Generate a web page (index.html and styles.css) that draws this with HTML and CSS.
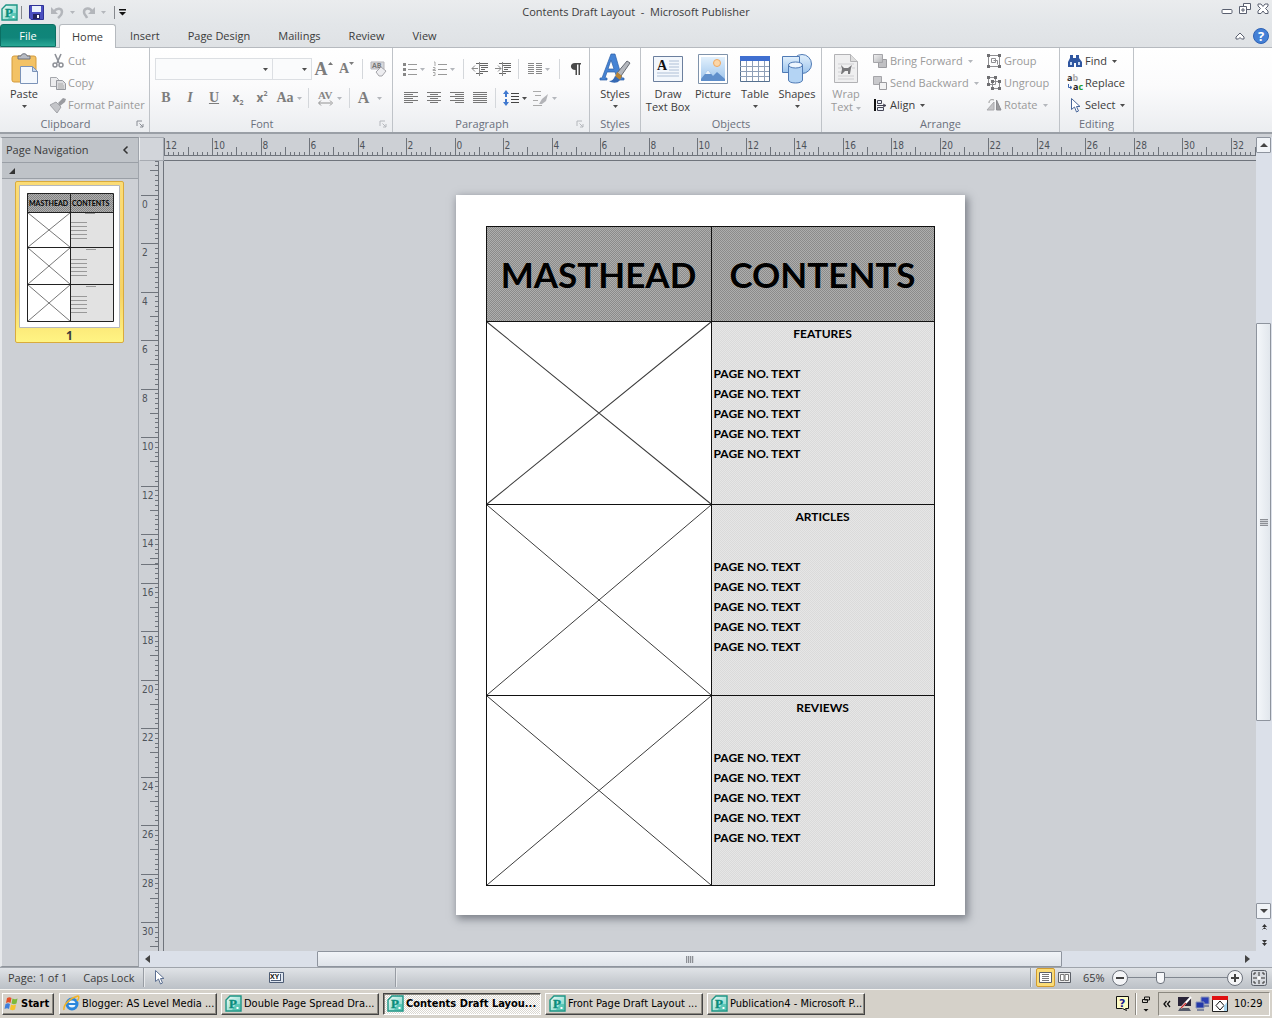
FILE: index.html
```html
<!DOCTYPE html>
<html lang="en">
<head>
<meta charset="utf-8">
<title>Contents Draft Layout - Microsoft Publisher</title>
<link rel="stylesheet" href="styles.css">
</head>
<body>
<svg class="defs" aria-hidden="true">
  <defs>
    <linearGradient id="teal" x1="0" y1="0" x2="1" y2="1"><stop offset="0" stop-color="#f2fdfa"/><stop offset="1" stop-color="#6fd0c0"/></linearGradient>
    <linearGradient id="blue" x1="0" y1="0" x2="0" y2="1"><stop offset="0" stop-color="#e2f0fc"/><stop offset="1" stop-color="#9cc4ec"/></linearGradient>
    <linearGradient id="grey" x1="0" y1="0" x2="1" y2="1"><stop offset="0" stop-color="#f2f2f3"/><stop offset="1" stop-color="#b4b5b8"/></linearGradient>
  </defs>
  <symbol id="pub" viewBox="0 0 17 17">
    <path d="M5 1h11v15H1V5z" fill="url(#teal)" stroke="#1c9585" stroke-width="1.4"/>
    <path d="M11 9h4v6H7z" fill="#35b8a4" opacity=".6"/>
    <text x="4" y="13" font-family="Liberation Serif, serif" font-weight="700" font-size="13" fill="#0b8d7d" stroke="#0b8d7d" stroke-width=".4">P</text>
    <path d="M11.500 12h2v2h-2z" fill="#fff"/>
  </symbol>
  <symbol id="down" viewBox="0 0 5 3"><path d="M0 0h5L2.500 3z" fill="currentColor"/></symbol>
  <symbol id="launch" viewBox="0 0 8 8"><path d="M1 6V1h5M3.500 3.500L7 7M7 4v3H4" fill="none" stroke="currentColor"/></symbol>
</svg>

<header class="titlebar">
  <div class="quick">
    <svg width="17" height="17"><use href="#pub"/></svg>
    <i class="bar"></i>
    <button class="flat" aria-label="Save"><svg width="15" height="15" viewBox="0 0 15 15"><path d="M.5.500h14v14H2l-1.500-1.500z" fill="#4a4fc0" stroke="#2e3296"/><path d="M3 1h9v6H3z" fill="#eaf2fb"/><path d="M4 9h7v5H4z" fill="#23245f"/><path d="M8 10h2v3H8z" fill="#fff"/></svg></button>
    <button class="flat undo" aria-label="Undo"><svg width="14" height="13" viewBox="0 0 14 13"><path d="M3 5.500C6 1.500 11 2 11 6c0 3-2 4-4 6" fill="none" stroke="#b3b6bb" stroke-width="2.500"/><path d="M0 1v7h7z" fill="#b3b6bb"/></svg></button>
    <svg class="dd pale" width="5" height="3"><use href="#down"/></svg>
    <button class="flat redo" aria-label="Redo"><svg width="14" height="13" viewBox="0 0 14 13"><path d="M10 5.500C8 1 2 2 2 6c0 3 2 3 3 6" fill="none" stroke="#b3b6bb" stroke-width="2.500"/><path d="M13 1v7H6z" fill="#b3b6bb"/></svg></button>
    <svg class="dd pale" width="5" height="3"><use href="#down"/></svg>
    <i class="bar"></i>
    <button class="flat" aria-label="Customize toolbar"><svg width="7" height="7" viewBox="0 0 7 7"><path d="M0 0h7v1.500H0zM0 3h7L3.500 6.500z" fill="#111"/></svg></button>
  </div>
  <h1>Contents Draft Layout &nbsp;-&nbsp; Microsoft Publisher</h1>
  <div class="winbtns">
    <button class="flat" aria-label="Minimize"><svg width="12" height="12" viewBox="0 0 12 12"><rect x="1" y="6.500" width="10" height="4" rx="1" fill="#fff" stroke="#5a6070"/></svg></button>
    <button class="flat" aria-label="Restore"><svg width="12" height="12" viewBox="0 0 12 12"><path d="M4.500.500h7v6h-7z" fill="#fff" stroke="#5a6070"/><path d="M.5 3.500h7v7h-7z" fill="#fff" stroke="#5a6070"/><path d="M3 6h2v2H3z" fill="#fff" stroke="#5a6070"/></svg></button>
    <button class="flat" aria-label="Close"><svg width="12" height="12" viewBox="0 0 12 12"><path d="M1 1h3l2 2.500L8 1h3v2L8.500 5.500 11 8v2.500H8L6 8l-2 2.500H1V8l2.500-2.500L1 3z" fill="#fff" stroke="#5a6070"/></svg></button>
  </div>
</header>

<nav class="tabs">
  <button class="tab file">File</button>
  <button class="tab home">Home</button>
  <button class="tab">Insert</button>
  <button class="tab">Page Design</button>
  <button class="tab">Mailings</button>
  <button class="tab">Review</button>
  <button class="tab">View</button>
  <div class="tabend">
    <button class="flat" aria-label="Minimize the ribbon"><svg width="10" height="8" viewBox="0 0 10 8"><path d="M1 5l4-4 4 4v2H6.500L5 5.500 3.500 7H1z" fill="#fff" stroke="#5a6070"/></svg></button>
    <button class="flat" aria-label="Help"><svg width="16" height="16" viewBox="0 0 16 16"><circle cx="8" cy="8" r="7.500" fill="#4480d6" stroke="#2f62b4"/><text x="8" y="12.500" text-anchor="middle" font-family="Open Sans, sans-serif" font-weight="700" font-size="13" fill="#fff">?</text></svg></button>
  </div>
</nav>

<section class="ribbon">
  <div class="group clip">
    <div class="gbody">
      <button class="big"><svg width="32" height="32" viewBox="0 0 32 32"><rect x="4" y="3" width="24" height="26" rx="2" fill="#f3c265" stroke="#d49b3c"/><path d="M10 6V3h3c0-3 6-3 6 0h3v3z" fill="#b8bcc4" stroke="#6c717c"/><path d="M12.500 13.500h12l5 5v12h-17z" fill="#f4f8fd" stroke="#7b93b8"/><path d="M24.500 13.500v5h5z" fill="#c5d6ec" stroke="#7b93b8"/></svg><span>Paste</span><svg class="dd" width="5" height="3"><use href="#down"/></svg></button>
      <div class="smalls">
        <button class="sm off"><svg width="16" height="16" viewBox="0 0 16 16"><path d="M5 1l4 9M11 1l-4 9" stroke="#8d9097" stroke-width="1.600"/><circle cx="5" cy="12" r="2" fill="none" stroke="#8d9097" stroke-width="1.500"/><circle cx="11" cy="12" r="2" fill="none" stroke="#8d9097" stroke-width="1.500"/></svg>Cut</button>
        <button class="sm off"><svg width="16" height="16" viewBox="0 0 16 16"><path d="M.5 2.500h6l2 2v7h-8z" fill="#ececee" stroke="#a5a7ac"/><path d="M6.500 5.500h6l3 3v6h-9z" fill="#dcdcdf" stroke="#97999f"/><path d="M8 9h5M8 11h6M8 13h6" stroke="#aaa"/></svg>Copy</button>
        <button class="sm off"><svg width="16" height="16" viewBox="0 0 16 16"><path d="M0 8l6-3 5 5-4 6z" fill="#c4c5c9" stroke="#a2a3a8"/><path d="M8 6l5-5 3 1-1 3-5 4z" fill="#9a9ba0"/></svg>Format Painter</button>
      </div>
    </div>
    <div class="glabel"><span>Clipboard</span><button class="launch" aria-label="Clipboard options"><svg width="8" height="8"><use href="#launch"/></svg></button></div>
  </div>

  <div class="group font">
    <div class="gbody rows">
      <div class="row">
        <button class="combo wide" aria-label="Font"><svg class="dd" width="5" height="3"><use href="#down"/></svg></button>
        <button class="combo" aria-label="Font size"><svg class="dd" width="5" height="3"><use href="#down"/></svg></button>
        <button class="t serif fs18" aria-label="Grow font">A<svg class="sup" width="5" height="3" viewBox="0 0 5 3"><path d="M0 3h5L2.500 0z" fill="#777"/></svg></button>
        <button class="t serif fs14" aria-label="Shrink font">A<svg class="sup" width="5" height="3"><use href="#down"/></svg></button>
        <i class="sep"></i>
        <button class="t" aria-label="Clear formatting"><svg width="17" height="16" viewBox="0 0 17 16"><path d="M1 1h13v7H1z" fill="#d8d8db" stroke="#b5b5ba"/><text x="2" y="7" font-family="Open Sans, sans-serif" font-weight="700" font-size="7" fill="#777">AB</text><path d="M6 11l5-5 5 4-4 5H9z" fill="#ededf0" stroke="#a5a5aa"/></svg></button>
      </div>
      <div class="row r2">
        <button class="t m serif fs14">B</button>
        <button class="t m serif fs14 it">I</button>
        <button class="t m serif fs14 un">U</button>
        <button class="t m fs12 bold">x<sub>2</sub></button>
        <button class="t m fs12 bold">x<sup>2</sup></button>
        <button class="t l serif fs14">Aa<svg class="dd pale" width="5" height="3"><use href="#down"/></svg></button>
        <i class="sep"></i>
        <button class="t xl" aria-label="Character spacing"><svg width="17" height="16" viewBox="0 0 17 16"><text x="1" y="9" font-family="Liberation Serif, serif" font-weight="700" font-size="11" fill="#858585">AV</text><path d="M2 13h12M4 10.500L1.500 13 4 15.500M13 10.500l2.500 2.500-2.500 2.500" fill="none" stroke="#929292"/></svg><svg class="dd pale" width="5" height="3"><use href="#down"/></svg></button>
        <i class="sep"></i>
        <button class="t xl serif fs16 wideg">A<svg class="dd pale" width="5" height="3"><use href="#down"/></svg></button>
      </div>
    </div>
    <div class="glabel"><span>Font</span><button class="launch off" aria-label="Font options"><svg width="8" height="8"><use href="#launch"/></svg></button></div>
  </div>

  <div class="group para">
    <div class="gbody rows">
      <div class="row">
        <button class="t l" aria-label="Bullets"><svg width="14" height="14" viewBox="0 0 14 14"><path d="M5 2.500h9M5 7.500h9M5 12.500h9" stroke="#999"/><path d="M0 1h3v3H0zM0 6h3v3H0zM0 11h3v3H0z" fill="#888"/></svg><svg class="dd pale" width="5" height="3"><use href="#down"/></svg></button>
        <button class="t l" aria-label="Numbering"><svg width="14" height="14" viewBox="0 0 14 14"><path d="M5 2.500h9M5 7.500h9M5 12.500h9" stroke="#999"/><path d="M1 0h1v4M0 5.500h2v2H0v1h3M0 10.500h2v3H0" fill="none" stroke="#aaa"/></svg><svg class="dd pale" width="5" height="3"><use href="#down"/></svg></button>
        <i class="sep"></i>
        <button class="t" aria-label="Decrease indent"><svg width="16" height="14" viewBox="0 0 16 14"><path d="M4 1.500h12M7 3.500h9M9 5.500h7M9 7.500h4M7 9.500h9M4 11.500h7" stroke="#666"/><path d="M0 6.500h6M3 3.500l-3 3 3 3M7.500 0v14" fill="none" stroke="#8a8a8a"/></svg></button>
        <button class="t" aria-label="Increase indent"><svg width="16" height="14" viewBox="0 0 16 14"><path d="M4 1.500h12M7 3.500h9M9 5.500h7M9 7.500h4M7 9.500h9M4 11.500h7" stroke="#666"/><path d="M0 6.500h6M3 3.500l3 3-3 3M7.500 0v14" fill="none" stroke="#8a8a8a"/></svg></button>
        <i class="sep"></i>
        <button class="t xl" aria-label="Columns"><svg width="14" height="12" viewBox="0 0 14 12"><path d="M0 .5h6M0 2.500h6M0 4.500h6M0 6.500h6M0 8.500h6M0 10.500h6M8 .5h6M8 2.500h6M8 4.500h6M8 6.500h6M8 8.500h6M8 10.500h6" stroke="#888"/></svg><svg class="dd pale" width="5" height="3"><use href="#down"/></svg></button>
        <i class="sep"></i>
        <button class="t" aria-label="Show special characters"><svg width="10" height="12" viewBox="0 0 10 12"><path d="M10 0v1.500H9V12H7.500V1.500H6V12H4.500V7C-1.500 7-1.500 0 4 0z" fill="#4a4a4a"/></svg></button>
      </div>
      <div class="row">
        <button class="t" aria-label="Align left"><svg width="14" height="12" viewBox="0 0 14 12"><path d="M0 .5h14M0 2.500h9M0 4.500h14M0 6.500h9M0 8.500h14M0 10.500h9" stroke="#777"/></svg></button>
        <button class="t" aria-label="Center"><svg width="14" height="12" viewBox="0 0 14 12"><path d="M0 .5h14M3 2.500h8M0 4.500h14M3 6.500h8M0 8.500h14M3 10.500h8" stroke="#777"/></svg></button>
        <button class="t" aria-label="Align right"><svg width="14" height="12" viewBox="0 0 14 12"><path d="M0 .5h14M5 2.500h9M0 4.500h14M5 6.500h9M0 8.500h14M5 10.500h9" stroke="#777"/></svg></button>
        <button class="t" aria-label="Justify"><svg width="14" height="12" viewBox="0 0 14 12"><path d="M0 .5h14M0 2.500h14M0 4.500h14M0 6.500h14M0 8.500h14M0 10.500h14" stroke="#777"/></svg></button>
        <i class="sep"></i>
        <button class="t l" aria-label="Line spacing"><svg width="16" height="16" viewBox="0 0 16 16"><path d="M8 3.500h8M8 6.500h8M8 9.500h8M8 12.500h8" stroke="#444"/><path d="M3 0l3 4H4v3H2V4H0zM3 16l3-4H4V9H2v3H0z" fill="#3f78cf"/></svg><svg class="dd" width="5" height="3"><use href="#down"/></svg></button>
        <button class="t l" aria-label="Paragraph spacing"><svg width="16" height="16" viewBox="0 0 16 16"><path d="M0 1.500h8M2 5.500h6M0 10.500h5M0 15.500h9" stroke="#aaa"/><path d="M6 14l3-5 6-5-2 7-4 3z" fill="#b3b4b8"/></svg><svg class="dd pale" width="5" height="3"><use href="#down"/></svg></button>
      </div>
    </div>
    <div class="glabel"><span>Paragraph</span><button class="launch off" aria-label="Paragraph options"><svg width="8" height="8"><use href="#launch"/></svg></button></div>
  </div>

  <div class="group styles">
    <div class="gbody"><button class="big"><svg width="32" height="32" viewBox="0 0 32 32"><path d="M12 1h4l7 24h2v2h-9v-2h2l-2-6H8l-2 6h2v2H1v-2h2zM12 7L9 16h6z" fill="#4583d4" stroke="#2c60a8" stroke-width=".7"/><path d="M28 8l3 2-9 13-4-3z" fill="#b4b7bd" stroke="#666a73"/><path d="M18 19l5 4-2 4-5-3z" fill="#b88436"/><path d="M16 23l5 4c-3 4-8 3-11 1 3 0 5-2 6-5z" fill="#3569b4"/></svg><span>Styles</span><svg class="dd" width="5" height="3"><use href="#down"/></svg></button></div>
    <div class="glabel"><span>Styles</span></div>
  </div>

  <div class="group objects">
    <div class="gbody">
      <button class="big"><svg width="32" height="32" viewBox="0 0 32 32"><path d="M1.500 3.500h29v25h-29z" fill="#f3f7fc" stroke="#6b7f9e"/><path d="M17 8h10M17 11h10M17 14h10M17 17h10M5 20h22M5 23h22" stroke="#aebfd6"/><text x="5" y="17" font-family="Liberation Serif, serif" font-weight="700" font-size="14" fill="#111">A</text></svg><span>Draw<br>Text Box</span></button>
      <button class="big b42"><svg width="32" height="32" viewBox="0 0 32 32"><path d="M1.500 1.500h29v29h-29z" fill="#fff" stroke="#7f93ab"/><path d="M4 4h24v24H4z" fill="url(#blue)"/><circle cx="20" cy="10" r="3.500" fill="#fbd6a8" stroke="#f0a860"/><path d="M4 26l7-9 5 6 4-4 8 7v2H4z" fill="#5f8fcb"/><path d="M8 21l3-4 3 4z" fill="#e9f2fb"/></svg><span>Picture</span></button>
      <button class="big b42"><svg width="32" height="32" viewBox="0 0 32 32"><path d="M1.500 3.500h29v25h-29z" fill="#fff" stroke="#55708f"/><path d="M1 3h30v5H1z" fill="#3f6fd0"/><path d="M7.500 8v20M13.500 8v20M19.500 8v20M25.500 8v20M1 13.500h29M1 18.500h29M1 23.500h29" stroke="#8fa0b8"/></svg><span>Table</span><svg class="dd" width="5" height="3"><use href="#down"/></svg></button>
      <button class="big b42"><svg width="32" height="32" viewBox="0 0 32 32"><circle cx="21" cy="11" r="9.500" fill="url(#blue)" stroke="#4f7ab5"/><path d="M1.500 3.500h17v16h-17z" fill="url(#blue)" stroke="#4f7ab5"/><path d="M7.500 12v15c0 4 14 4 14 0V12z" fill="#b4d4f4" stroke="#4f7ab5"/><ellipse cx="14.500" cy="12" rx="7" ry="3" fill="#eef6fe" stroke="#4f7ab5"/></svg><span>Shapes</span><svg class="dd" width="5" height="3"><use href="#down"/></svg></button>
    </div>
    <div class="glabel"><span>Objects</span></div>
  </div>

  <div class="group arrange">
    <div class="gbody">
      <button class="big off"><svg width="32" height="32" viewBox="0 0 32 32"><path d="M4.500 1.500h16l7 7v21h-23z" fill="#efeff0" stroke="#b2b2b5"/><path d="M20.500 1.500v7h7" fill="#ddd" stroke="#b2b2b5"/><path d="M8 11h16M8 23h16M8 26h16M8 15h3M8 19h3M22 15h3" stroke="#cfcfd2"/><path d="M11 12l3 3h4l4-3-1 3-1 6h-2v-3h-3l-3 3h-1l1-5z" fill="#77777a"/></svg><span>Wrap<br>Text <svg class="dd pale inl" width="5" height="3"><use href="#down"/></svg></span></button>
      <div class="smalls order">
        <button class="sm off"><svg width="16" height="16" viewBox="0 0 16 16"><path d="M6.500 6.500h8v8h-8z" fill="#c0c0c3" stroke="#9b9b9f"/><path d="M1.500 1.500h9v8h-9z" fill="url(#grey)" stroke="#a5a5a9"/></svg>Bring Forward<svg class="dd pale" width="5" height="3"><use href="#down"/></svg></button>
        <button class="sm off"><svg width="16" height="16" viewBox="0 0 16 16"><path d="M1.500 1.500h8v8h-8z" fill="#c9c9cc" stroke="#a5a5a9"/><path d="M7.500 7.500h7v7h-7z" fill="#f2f2f3" stroke="#9b9b9f"/></svg>Send Backward<svg class="dd pale" width="5" height="3"><use href="#down"/></svg></button>
        <button class="sm"><svg width="16" height="16" viewBox="0 0 16 16"><path d="M3 2v12" stroke="#111" stroke-width="2"/><path d="M5.500 3.500h4v3h-4zM5.500 10.500h6v3h-6z" fill="#e8eef6" stroke="#445"/><path d="M5 8.500h9M11 7l3 1.500-3 1.500" stroke="#445" fill="none"/></svg>Align<svg class="dd" width="5" height="3"><use href="#down"/></svg></button>
      </div>
      <div class="smalls">
        <button class="sm off"><svg width="16" height="16" viewBox="0 0 16 16"><path d="M2.500 2.500h11v11h-11zM5.500 5.500h4v4h-4zM7.500 7.500h4v4" fill="none" stroke="#8f8f92"/><path d="M1 1h3v3H1zM12 1h3v3h-3zM1 12h3v3H1zM12 12h3v3h-3z" fill="#6f6f72"/></svg>Group</button>
        <button class="sm off"><svg width="16" height="16" viewBox="0 0 16 16"><path d="M2.500 2.500h7v7h-7zM6.500 6.500h7v7h-7z" fill="none" stroke="#8f8f92"/><path d="M1 1h3v3H1zM8 1h3v3H8zM1 8h3v3H1zM5 5h3v3H5zM12 5h3v3h-3zM5 12h3v3H5zM12 12h3v3h-3z" fill="#6f6f72"/></svg>Ungroup</button>
        <button class="sm off"><svg width="16" height="16" viewBox="0 0 16 16"><path d="M1 13h7V5z" fill="#c4c4c7" stroke="#aaaaad"/><path d="M10.500 3v10H15z" fill="#9b9b9e" stroke="#8c8c90"/><path d="M3 6c0-3 2-4 5-3" fill="none" stroke="#999"/></svg>Rotate<svg class="dd pale" width="5" height="3"><use href="#down"/></svg></button>
      </div>
    </div>
    <div class="glabel"><span>Arrange</span></div>
  </div>

  <div class="group editing">
    <div class="gbody">
      <div class="smalls">
        <button class="sm"><svg width="16" height="16" viewBox="0 0 16 16"><path d="M3 2h3v3h3V2h3v3l3 4v5H9v-4H7v4H1V9l2-4z" fill="#2f56a0"/><path d="M3 9h2v3H3zM11 9h2v3h-2z" fill="#c9dbf5"/></svg>Find<svg class="dd" width="5" height="3"><use href="#down"/></svg></button>
        <button class="sm"><svg width="16" height="16" viewBox="0 0 16 16"><g font-family="Open Sans, sans-serif" font-weight="700" font-size="9"><text x="0" y="6" fill="#333">a<tspan fill="#aaa">b</tspan></text><text x="6" y="15" fill="#222">a<tspan fill="#1f9d2c">c</tspan></text></g><path d="M1.500 9v3.500h3M3 11l2 1.500-2 1.500" fill="none" stroke="#3b66b0"/></svg>Replace</button>
        <button class="sm"><svg width="16" height="16" viewBox="0 0 16 16"><path d="M4.500 1.500v11l3-2.500 2 5 2-1-2-4.500h3.500z" fill="#fff" stroke="#49679b"/></svg>Select<svg class="dd" width="5" height="3"><use href="#down"/></svg></button>
      </div>
    </div>
    <div class="glabel"><span>Editing</span></div>
  </div>
</section>

<main class="work">
  <aside class="nav">
    <div class="navhead"><h2>Page Navigation</h2><button class="flat" aria-label="Collapse"><svg width="5" height="8" viewBox="0 0 5 8"><path d="M4.500.500L1 4l3.500 3.500" fill="none" stroke="#333" stroke-width="1.500"/></svg></button></div>
    <div class="navsub"><svg width="6" height="6" viewBox="0 0 6 6"><path d="M6 0v6H0z" fill="#333"/></svg></div>
    <button class="thumb">
      <svg width="101" height="143" viewBox="0 0 101 143">
        <defs>
          <pattern id="dk" width="2" height="2" patternUnits="userSpaceOnUse"><path d="M0 0h2v2H0z" fill="#b0b0b0"/><path d="M0 0h1v1H0zM1 1h1v1H1z" fill="#828282"/></pattern>
        </defs>
        <path d="M.5.500h100v142H.5z" fill="#fff" stroke="#b5b8bd"/>
        <path d="M8 8h86v19H8z" fill="url(#dk)"/>
        <path d="M51 27h43v109H51z" fill="#e2e2e2"/>
        <path d="M8.500 27.500l43 35m0-35l-43 35m0 0l43 37m0-37l-43 37m0 0l43 37m0-37l-43 37" stroke="#777" fill="none"/>
        <path d="M8.500 8.500h86v128h-86zM8 27.500h86M8 62.500h86M8 99.500h86M51.500 8v128" stroke="#222" fill="none"/>
        <path d="M66 28.500h10M67 64.500h10M67 101.500h10M52 37.500h16M52 41.500h16M52 45.500h16M52 49.500h16M52 53.500h16M52 74.500h16M52 78.500h16M52 82.500h16M52 86.500h16M52 90.500h16M52 111.500h16M52 115.500h16M52 119.500h16M52 123.500h16M52 127.500h16" stroke="#999"/>
        <g font-family="Lato, sans-serif" font-weight="700" font-size="7" fill="#000"><text x="10" y="21">MASTHEAD</text><text x="53" y="21">CONTENTS</text></g>
      </svg>
      <span>1</span>
    </button>
  </aside>

  <div class="editor">
    <div class="corner"></div>
    <svg class="hruler" id="hruler" aria-hidden="true"></svg>
    <svg class="vruler" id="vruler" aria-hidden="true"></svg>
    <div class="canvas">
      <article class="page" id="page">
        <div class="cell head">MASTHEAD</div>
        <div class="cell head">CONTENTS</div>
        <div class="cell pic"><svg viewBox="0 0 100 100" preserveAspectRatio="none"><path d="M0 0L100 100M100 0L0 100"/></svg></div>
        <div class="cell text"><h3>FEATURES</h3><p>PAGE NO. TEXT</p><p>PAGE NO. TEXT</p><p>PAGE NO. TEXT</p><p>PAGE NO. TEXT</p><p>PAGE NO. TEXT</p></div>
        <div class="cell pic"><svg viewBox="0 0 100 100" preserveAspectRatio="none"><path d="M0 0L100 100M100 0L0 100"/></svg></div>
        <div class="cell text low"><h3>ARTICLES</h3><p>PAGE NO. TEXT</p><p>PAGE NO. TEXT</p><p>PAGE NO. TEXT</p><p>PAGE NO. TEXT</p><p>PAGE NO. TEXT</p></div>
        <div class="cell pic"><svg viewBox="0 0 100 100" preserveAspectRatio="none"><path d="M0 0L100 100M100 0L0 100"/></svg></div>
        <div class="cell text low"><h3>REVIEWS</h3><p>PAGE NO. TEXT</p><p>PAGE NO. TEXT</p><p>PAGE NO. TEXT</p><p>PAGE NO. TEXT</p><p>PAGE NO. TEXT</p></div>
      </article>
    </div>
    <div class="hscroll">
      <button class="flat arrow" aria-label="Scroll left"><svg width="5" height="8" viewBox="0 0 5 8"><path d="M5 0v8L0 4z" fill="#444"/></svg></button>
      <div class="before"></div><div class="hthumb"><i></i></div><div class="after"></div>
      <button class="flat arrow" aria-label="Scroll right"><svg width="5" height="8" viewBox="0 0 5 8"><path d="M0 0v8l5-4z" fill="#444"/></svg></button>
    </div>
  </div>
  <div class="vscroll">
    <button class="vbtn" aria-label="Scroll up"><svg width="8" height="4" viewBox="0 0 8 4"><path d="M0 4h8L4 0z" fill="#444"/></svg></button>
    <div class="before"></div><div class="vthumb"><i></i></div><div class="after"></div>
    <button class="vbtn" aria-label="Scroll down"><svg width="8" height="4" viewBox="0 0 8 4"><path d="M0 0h8L4 4z" fill="#444"/></svg></button>
    <button class="flat jump" aria-label="Previous page"><svg width="5" height="6" viewBox="0 0 5 6"><path d="M0 3h5L2.500 0zM0 6h5L2.500 3zM0 5h5v1H0z" fill="#333"/></svg></button>
    <button class="flat jump" aria-label="Next page"><svg width="5" height="6" viewBox="0 0 5 6"><path d="M0 3h5L2.500 6zM0 0h5L2.500 3z" fill="#333"/></svg></button>
  </div>
</main>

<footer class="status">
  <span class="pageno">Page: 1 of 1</span><span class="caps">Caps Lock</span>
  <i class="div"></i>
  <div class="pos"><svg width="10" height="15" viewBox="0 0 10 15"><path d="M.5.500v11l3-2.500 2 5 2-1-2-4.500H9z" fill="#fff" stroke="#5d7092"/></svg></div>
  <div class="size"><svg width="15" height="11" viewBox="0 0 15 11"><path d="M.5.500h14v10H.5z" fill="#dfe6f0" stroke="#4d5c75"/><path d="M1 1h10v7H1z" fill="#fff"/><text x="1" y="7" font-family="Open Sans, sans-serif" font-weight="700" font-size="7" fill="#111">XY</text><path d="M11.500 2v6M2 8.500h10" stroke="#4d5c75"/></svg></div>
  <i class="div"></i>
  <span class="grow"></span>
  <i class="div"></i>
  <button class="view on" aria-label="Single page"><svg width="13" height="11" viewBox="0 0 13 11"><path d="M.5.500h12v10H.5z" fill="#fff" stroke="#5c6068"/><path d="M3 2.500h7M3 4.500h7M3 6.500h7M3 8.500h7" stroke="#777"/></svg></button>
  <button class="view" aria-label="Two-page spread"><svg width="13" height="11" viewBox="0 0 13 11"><path d="M.5.500h12v10H.5z" fill="#eee" stroke="#5c6068"/><path d="M2.500 2.500h3.500v6H2.500zM7 2.500h3.500v6H7z" fill="#fff" stroke="#777"/></svg></button>
  <span class="pct">65%</span>
  <button class="flat" aria-label="Zoom out"><svg width="16" height="16" viewBox="0 0 16 16"><circle cx="8" cy="8" r="7.500" fill="#f4f5f7" stroke="#6c727c"/><path d="M4 8h8" stroke="#444" stroke-width="2"/></svg></button>
  <input class="zoom" type="range" min="0" max="100" value="31" aria-label="Zoom">
  <button class="flat" aria-label="Zoom in"><svg width="16" height="16" viewBox="0 0 16 16"><circle cx="8" cy="8" r="7.500" fill="#f4f5f7" stroke="#6c727c"/><path d="M4 8h8M8 4v8" stroke="#444" stroke-width="2"/></svg></button>
  <button class="flat fit" aria-label="Whole page"><svg width="16" height="16" viewBox="0 0 16 16"><rect x=".5" y=".5" width="15" height="15" rx="2" fill="#d6d9de" stroke="#5a5f68"/><path d="M8 2v4M8 10v4M2 8h4M10 8h4M3 5V3h2M11 3h2v2M13 11v2h-2M5 13H3v-2" fill="none" stroke="#333"/><path d="M6.500 6.500h3v3h-3z" fill="#fff"/></svg></button>
</footer>

<footer class="taskbar">
  <button class="start"><svg width="16" height="15" viewBox="0 0 16 15"><path d="M3 2c2-1 3-1 4.500 0L6.500 7C5 6 4 6 2 7z" fill="#e4502a"/><path d="M8.500 2.500c2 1 3 1 5 0l-1 5c-2 1-3 1-5 0z" fill="#7cba3a"/><path d="M1.500 8c2-1 3-1 4.500 0L5 13c-1.500-1-2.500-1-4.500 0z" fill="#3f7fdc"/><path d="M7 8.500c2 1 3 1 5 0l-1 5c-2 1-3 1-5 0z" fill="#f6c32c"/></svg>Start</button>
  <div class="tasks">
    <button class="task"><svg width="17" height="17" viewBox="0 0 17 17"><circle cx="9" cy="9" r="5" fill="#eaf6ff" stroke="#2c86dc" stroke-width="3"/><path d="M5 9h9" stroke="#2c86dc" stroke-width="2"/><path d="M1 15C0 10 7 3 15 1c2 1 0 4-1 5" fill="none" stroke="#f0b429" stroke-width="1.500"/></svg><span>Blogger: AS Level Media ...</span></button>
    <button class="task"><svg width="17" height="17"><use href="#pub"/></svg><span>Double Page Spread Dra...</span></button>
    <button class="task active"><svg width="17" height="17"><use href="#pub"/></svg><span>Contents Draft Layou...</span></button>
    <button class="task"><svg width="17" height="17"><use href="#pub"/></svg><span>Front Page Draft Layout ...</span></button>
    <button class="task"><svg width="17" height="17"><use href="#pub"/></svg><span>Publication4 - Microsoft P...</span></button>
  </div>
  <div class="lang">
    <svg width="14" height="15" viewBox="0 0 14 15"><path d="M.5.500h12v12h-3l1 2-4-2h-6z" fill="#fdfbc4" stroke="#111"/><text x="3" y="11" font-family="DejaVu Sans, sans-serif" font-weight="700" font-size="11" fill="#1a1a8c">?</text></svg>
    <i class="groove"></i>
    <svg width="8" height="16" viewBox="0 0 8 16"><path d="M2.500 1h5v3h-5zM.5 3.500h5v3h-5z" fill="#d6d2ca" stroke="#111"/><path d="M1.500 13h5L4 15.500z" fill="#111"/></svg>
  </div>
  <div class="tray">
    <svg width="8" height="8" viewBox="0 0 8 8"><path d="M3.500 1L1 4l2.500 3M7 1L4.500 4 7 7" fill="none" stroke="#111" stroke-width="1.300"/></svg>
    <svg width="16" height="16" viewBox="0 0 16 16"><path d="M1 1h13v9H1z" fill="#2a2438"/><path d="M3 12h9l2 3H1z" fill="#555a6a"/><path d="M14 1L4 12" stroke="#fff" stroke-width="2"/><path d="M9 7l-5 5" stroke="#c33" stroke-width="1.500"/></svg>
    <svg width="15" height="16" viewBox="0 0 15 16"><path d="M6 1h8v7H6z" fill="#2c3fb4" stroke="#8d96b8"/><path d="M1 6h8v6H1z" fill="#2338a8" stroke="#8d96b8"/><path d="M2 14h7M9 10h5" stroke="#8087a0" stroke-width="2"/></svg>
    <svg width="16" height="16" viewBox="0 0 16 16"><path d="M.5.500h15v15H.5z" fill="#fff" stroke="#222"/><path d="M0 0h16v4H0z" fill="#e01010"/><path d="M8 5l4 4.500-4 4.500-4-4.500z" fill="#fff" stroke="#111"/><path d="M12 10v5h3V6z" fill="#a9d6f0"/></svg>
    <time>10:29</time>
  </div>
</footer>
<script src="ruler.js"></script>
</body>
</html>
```
FILE: styles.css
```css
* { box-sizing: border-box; }
body {
  margin: 0;
  min-height: 100vh;
  display: flex;
  flex-direction: column;
  font: 11px/14px "Open Sans", sans-serif;
  color: #3b3b3b;
  background: #cdd0d5;
}
h1, h2, h3, p { margin: 0; font: inherit; }
button { font: inherit; color: inherit; background: none; border: 0; padding: 0; margin: 0; }
svg { flex: none; display: block; overflow: visible; }
.defs { position: absolute; width: 0; height: 0; }
.flat { display: flex; align-items: center; justify-content: center; }
.dd { color: #4c4c4c; }
.dd.pale { color: #b4b7bc; }
.off { color: #9a9a9a; }

.titlebar {
  display: grid;
  grid-template-columns: 1fr auto 1fr;
  align-items: center;
  height: 24px;
  background: linear-gradient(#eaecee, #e3e6e9);
}
.quick { display: flex; align-items: center; gap: 5px; padding-left: 1px; height: 22px; }
.quick .bar { width: 1px; height: 13px; background: #85888d; margin: 0 0 0 -2px; }
.quick .bar + .flat { margin-left: 2px; }
.quick .undo { margin-left: 2px; }
.quick .redo { margin-left: 2px; }
.quick .dd + .bar { margin-left: 3px; }
.quick .bar + .flat:last-child { margin-left: -1px; }
.winbtns { display: flex; justify-content: flex-end; gap: 6px; padding: 0 3px 6px 0; }

.tabs { display: flex; height: 24px; background: linear-gradient(#e3e6e9, #dfe2e5); border-bottom: 1px solid #b6babf; }
.tab { height: 23px; padding: 0 14px; }
.tab.file { width: 56px; padding: 0; color: #fff; border-radius: 3px 3px 0 0; background: linear-gradient(#0f8577, #10857a 60%, #2aa896); border: 1px solid #0b6f63; }
.tab.home { width: 57px; height: 24px; margin: 0 0 0 3px; padding: 0; background: #fff; border: 1px solid #b6babf; border-bottom: 0; border-radius: 3px 3px 0 0; }
.tabend { display: flex; gap: 8px; margin-left: auto; padding-right: 3px; }

.ribbon {
  display: flex;
  height: 86px;
  background: linear-gradient(#fff, #fbfbfc 45%, #ebedf0);
  border-bottom: 2px solid #9a9fa6;
}
.group { display: flex; flex-direction: column; flex: none; border-right: 1px solid #bfc3c8; }
.gbody { display: flex; flex: 1; padding-top: 2px; }
.glabel { display: flex; align-items: center; height: 16px; color: #6a6f7c; text-align: center; }
.glabel span { flex: 1; }
.launch { display: flex; width: 18px; height: 14px; justify-content: center; align-items: center; color: #888c94; }
.launch.off { color: #b4b7bc; }
.clip { width: 150px; }
.font { width: 243px; }
.para { width: 197px; }
.styles { width: 51px; }
.objects { width: 181px; }
.arrange { width: 238px; }
.editing { width: 74px; }

.big { display: flex; flex: none; flex-direction: column; align-items: center; width: 48px; height: 66px; padding-top: 3px; line-height: 13px; }
.big svg + span { padding-top: 2px; }
.big > .dd { margin-top: 5px; }
.b42 { width: 42px; }
.objects .gbody { padding-left: 3px; }
.styles .gbody { padding-left: 1px; }
.dd.inl { display: inline-block; vertical-align: middle; }
.smalls { display: flex; flex: none; flex-direction: column; padding-left: 2px; }
.sm { display: flex; align-items: center; gap: 2px; height: 22px; white-space: nowrap; }
.sm .dd { margin-left: 3px; }
.order { width: 114px; }
.editing .smalls { padding-left: 7px; }

.rows { flex-direction: column; gap: 7px; padding: 10px 0 0 6px; }
.font .rows { padding-left: 5px; }
.row { display: flex; align-items: center; height: 22px; }
.r2 { margin-left: -1px; }
.sep { width: 1px; height: 20px; margin: 0 4px; background: #d4d7db; }
.combo { display: flex; align-items: center; justify-content: flex-end; width: 39px; height: 22px; padding-right: 4px; background: #fafbfc; border: 1px solid #dcdfe3; }
.combo.wide { width: 117px; border-right: 0; }
.combo.wide + .combo { width: 40px; }
.t { display: flex; align-items: center; justify-content: center; gap: 3px; width: 23px; height: 22px; color: #7d7d7d; }
.m { width: 24px; }
.l { width: 30px; }
.xl { width: 32px; }
.serif { font-family: "Liberation Serif", serif; font-weight: 700; }
.bold { font-weight: 700; gap: 0; }
.it { font-style: italic; }
.un { text-decoration: underline; }
.fs12 { font-size: 12px; }
.fs14 { font-size: 14px; }
.fs16 { font-size: 16px; }
.fs18 { font-size: 18px; }
.wideg { gap: 8px; }
.t sub, .t sup { font-size: 7px; line-height: 7px; }
.t sub { align-self: flex-end; padding-bottom: 3px; }
.t sup { align-self: flex-start; padding-top: 3px; }
.t .sup { align-self: flex-start; margin: 4px 0 0 -3px; }

.work { display: flex; flex: 1; min-height: 0; padding-top: 3px; border-bottom: 1px solid #9fa4ab; }
.nav { width: 139px; flex: none; border: 1px solid #8f949b; border-left: 2px solid #e6e8eb; border-right-color: #9fa4ab; }
.navhead { display: flex; align-items: center; justify-content: space-between; height: 25px; padding: 0 10px 0 4px; background: #c0c4c9; border-bottom: 1px solid #9a9fa6; }
.navsub { display: flex; align-items: center; height: 16px; padding-left: 7px; background: #bfc3c8; border-bottom: 1px solid #9a9fa6; }
.thumb {
  display: flex; flex-direction: column; align-items: center;
  width: 109px; height: 162px; margin: 2px 0 0 13px; padding-top: 3px;
  background: linear-gradient(#fbdc76, #f6d365 70%, #fff483);
  border: 1px solid #d9ab3d; border-radius: 2px;
  font: 700 12px/15px "Open Sans", sans-serif;
}

.editor { flex: 1; display: grid; grid-template-columns: 25px 1fr; grid-template-rows: 24px 1fr 16px; min-width: 0; }
.corner { border: 1px solid #a7abb2; border-left-color: #eceef0; background: #d2d5da; }
.hruler { width: 100%; height: 24px; overflow: hidden; }
.vruler { width: 25px; height: 100%; overflow: hidden; }
.hruler, .vruler { font: 10px "DejaVu Sans Condensed", "DejaVu Sans", sans-serif; fill: #4e535a; }
.canvas { display: flex; align-items: center; justify-content: center; padding-bottom: 2px; }
.page {
  display: grid;
  grid-template: 96px 183px 191px 190px / 226px 223px;
  width: 509px; height: 720px;
  padding: 31px 30px 29px;
  background: #fff;
  box-shadow: 2px 3px 8px 1px rgba(70, 75, 85, .6);
  color: #000;
  font-family: Lato, sans-serif;
  font-weight: 700;
}
.cell { border: 0 solid #111; border-width: 0 1px 1px 0; min-width: 0; min-height: 0; }
.cell:nth-child(odd) { border-left-width: 1px; }
.cell.head { border-top-width: 1px; }
.head {
  display: flex; align-items: center; justify-content: center;
  font-size: 35px; line-height: 46px;
  background: repeating-conic-gradient(#8b8b8a 0 25%, #aeaead 0 50%) 0 0 / 2px 2px;
}
.pic svg { width: 100%; height: 100%; }
.pic path { fill: none; stroke: #3c3c3c; stroke-width: 1px; vector-effect: non-scaling-stroke; }
.text {
  padding: 2px;
  font-size: 12px; line-height: 20px;
  background: repeating-conic-gradient(#dadada 0 25%, #e6e6e6 0 50%) 0 0 / 2px 2px;
}
.text h3 { text-align: center; margin-bottom: 20px; }
.low h3 { margin-bottom: 30px; }

.hscroll { grid-column: 1 / -1; display: flex; background: #dbe0e9; }
.arrow { width: 17px; }
.hscroll .before { flex: 161; }
.hscroll .after { flex: 177; }
.hthumb { flex: 746; display: flex; align-items: center; justify-content: center; border: 1px solid #8e949e; border-radius: 1px; background: linear-gradient(#f1f4f8, #dfe3e9); }
.hthumb i { width: 8px; height: 7px; background: repeating-linear-gradient(90deg, #8c8f95 0 1px, #d0d3d8 1px 2px); }
.vscroll { width: 16px; flex: none; display: flex; flex-direction: column; background: #dbe0e9; }
.vbtn { display: flex; align-items: center; justify-content: center; height: 16px; width: 15px; border: 1px solid #8e949e; border-radius: 1px; background: #f0f3f7; }
.vscroll .before { flex: 171; }
.vscroll .after { flex: 183; }
.vthumb { flex: 397; width: 15px; display: flex; align-items: center; justify-content: center; border: 1px solid #8e949e; border-radius: 1px; background: linear-gradient(90deg, #f4f7fa, #e2e7ed); }
.vthumb i { width: 8px; height: 7px; background: repeating-linear-gradient(#8c8f95 0 1px, #d0d3d8 1px 2px); }
.jump { height: 16px; width: 16px; }
.jump:last-child { margin-bottom: 16px; }

.status { display: flex; align-items: center; height: 21px; padding: 0 5px 2px 8px; background: linear-gradient(#e0e3e7, #c9cdd2 60%, #bcc1c7); }
.caps { margin: 0 8px 0 16px; }
.pos { width: 124px; padding-left: 10px; }
.size { width: 126px; }
.div { width: 2px; height: 19px; border-left: 1px solid #979ca3; border-right: 1px solid #e6e8eb; }
.grow { flex: 1; }
.view { display: flex; align-items: center; justify-content: center; width: 19px; height: 19px; }
.view.on { margin-left: 4px; background: #fbdc76; border: 1px solid #d19b2f; border-radius: 2px; }
.pct { width: 38px; padding-left: 9px; }
.zoom { appearance: none; width: 99px; height: 16px; margin: 0; background: linear-gradient(#80868f, #80868f) center / 100% 1px no-repeat; }
.zoom::-webkit-slider-thumb { appearance: none; width: 9px; height: 12px; background: #f7f8fa; border: 1px solid #6c727c; border-radius: 1px 1px 4px 4px; }
.fit { margin-left: 8px; }

.taskbar { display: flex; align-items: center; height: 29px; padding: 0 2px 1px; background: #d5d1c9; border-top: 1px solid #f6f5f2; color: #000; font-family: "DejaVu Sans Condensed", "DejaVu Sans", sans-serif; }
.start, .task { display: flex; align-items: center; height: 22px; background: #d5d1c9; border: 1px solid; border-color: #fff #444 #444 #fff; box-shadow: inset -1px -1px #8b8880; }
.start { width: 52px; gap: 1px; padding-left: 1px; font-weight: 700; }
.tasks { display: flex; gap: 4px; flex: 1; margin-left: 5px; min-width: 0; }
.task { flex: 0 1 158px; gap: 2px; padding: 0 3px; white-space: nowrap; overflow: hidden; }
.task.active { font-weight: 700; border-color: #444 #fff #fff #444; box-shadow: inset 1px 1px #8b8880; background: repeating-conic-gradient(#fff 0 25%, #d9d6cf 0 50%) 0 0 / 2px 2px; }
.lang { display: flex; align-items: center; gap: 5px; margin-right: 8px; }
.groove { width: 2px; height: 22px; border-left: 1px solid #8b8880; border-right: 1px solid #fff; }
.tray { display: flex; align-items: center; gap: 2px; width: 112px; height: 24px; padding-left: 4px; border: 1px solid; border-color: #8b8880 #fff #fff #8b8880; }
.tray svg:first-child { margin-right: 4px; }
.tray time { margin-left: 4px; }
```
FILE: ruler.js
```js
// Draws the tick marks and centimetre labels of both rulers, with the
// zero point at the page's top-left corner.
(function () {
  var NS = 'http://www.w3.org/2000/svg';
  var UNIT = 24.25;
  var POINTER = 15.25;
  var page = document.getElementById('page');

  function add(svg, name, attrs, text) {
    var el = document.createElementNS(NS, name);
    for (var key in attrs) el.setAttribute(key, attrs[key]);
    if (text !== undefined) el.textContent = text;
    svg.appendChild(el);
  }

  function draw(svg, horizontal) {
    var box = svg.getBoundingClientRect();
    var origin = page.getBoundingClientRect();
    var zero = Math.floor(horizontal ? origin.left - box.left : origin.top - box.top);
    var length = horizontal ? box.width : box.height;
    var d = '';
    svg.textContent = '';
    for (var i = Math.ceil(-zero / UNIT * 5); zero + i * UNIT / 5 < length; i++) {
      var at = Math.floor(zero + i * UNIT / 5) + 0.5;
      var start = i % 10 === 0 ? 1 : i % 5 === 0 ? 10 : 15;
      if (horizontal) d += 'M' + at + ' ' + start + 'V18';
      else d += 'M' + (start + 1) + ' ' + at + 'H19';
      if (i % 10 === 0) {
        add(svg, 'text', horizontal ? { x: at + 1, y: 12 } : { x: 3, y: at + 12 }, Math.abs(i / 5));
      }
    }
    if (horizontal) d += 'M0 18.5H' + length + 'M0 23.5H' + length;
    else {
      d += 'M19.5 0V' + length + 'M24.5 0V' + length;
      d += 'M2 ' + (Math.floor(zero + POINTER * UNIT) + 0.5) + 'H19';
    }
    add(svg, 'path', { d: d, stroke: '#6f747c', fill: 'none' });
  }

  function drawBoth() {
    draw(document.getElementById('hruler'), true);
    draw(document.getElementById('vruler'), false);
  }
  window.addEventListener('resize', drawBoth);
  drawBoth();
})();
```
